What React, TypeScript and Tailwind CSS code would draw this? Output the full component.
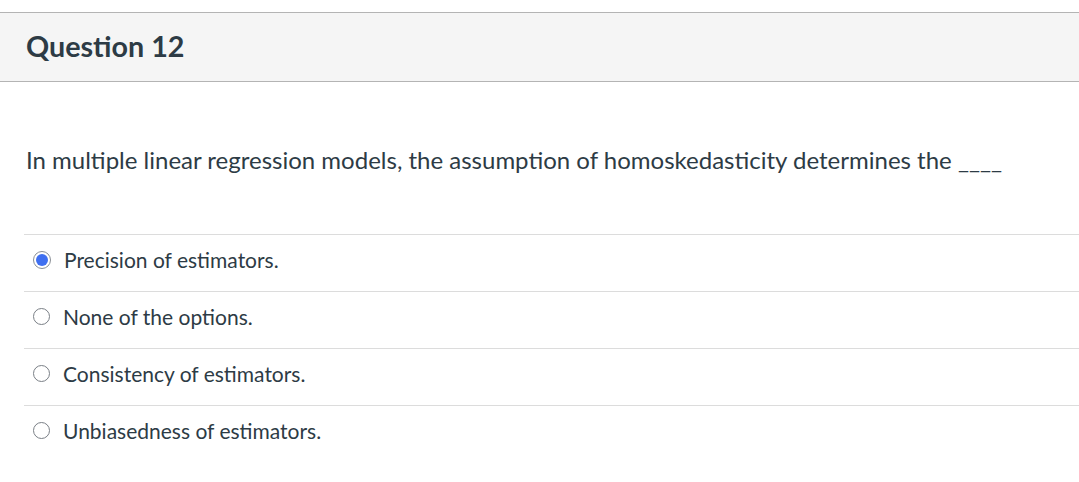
import React from 'react';

const answers = [
  { id: 'a1', text: 'Precision of estimators.', checked: true },
  { id: 'a2', text: 'None of the options.', checked: false },
  { id: 'a3', text: 'Consistency of estimators.', checked: false },
  { id: 'a4', text: 'Unbiasedness of estimators.', checked: false },
];

function Radio({ checked }: { checked: boolean }) {
  if (checked) {
    return (
      <span className="w-[18px] h-[18px] rounded-full border border-[#8a8f96] bg-white flex items-center justify-center shrink-0">
        <span className="w-[12px] h-[12px] rounded-full bg-[#3f6ff0]" />
      </span>
    );
  }
  return <span className="w-[17px] h-[17px] rounded-full border border-[#7a7f86] bg-white shrink-0" />;
}

function App() {
  return (
    <div className="w-[1079px] h-[482px] bg-white text-[#2d3b45] font-['Lato','Liberation_Sans',sans-serif] overflow-hidden">
      <div className="pt-[12px]">
        <div className="h-[70px] bg-[#f5f5f5] border-y border-[#b4b4b4] flex items-center px-[26px] pb-[2px]">
          <h2 className="text-[28.7px] font-bold leading-none">Question 12</h2>
        </div>
      </div>
      <div className="pl-[24px]">
        <p className="pl-[2px] pt-[64px] pb-[60px] text-[24px] leading-[28px]">
          In multiple linear regression models, the assumption of homoskedasticity determines the ____
        </p>
        <div>
          {answers.map(a => (
            <label key={a.id} className="h-[57px] border-t border-[#dcdcdc] flex items-center gap-[13px] pl-[9px] pb-[7px] text-[21px]">
              <Radio checked={a.checked} />
              <span>{a.text}</span>
            </label>
          ))}
        </div>
      </div>
    </div>
  );
}

export default App;
